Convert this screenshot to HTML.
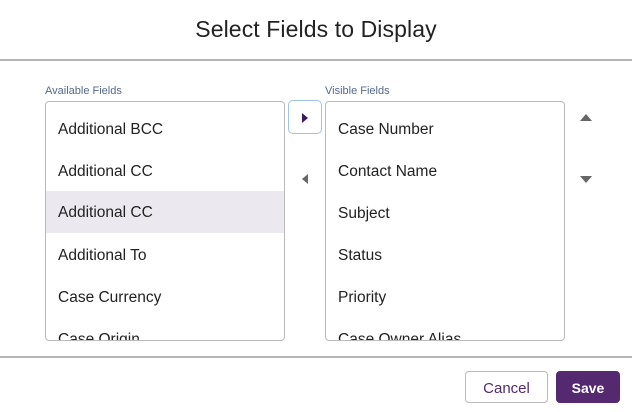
<!DOCTYPE html>
<html><head><style>
*{box-sizing:border-box;margin:0;padding:0}
body{width:632px;height:412px;background:#fff;font-family:"Liberation Sans",sans-serif;position:relative;overflow:hidden;color:#16325c}
.title{position:absolute;left:0;top:16px;width:632px;text-align:center;font-size:23px;color:#222;letter-spacing:0.1px}
.hr{position:absolute;left:0;width:632px;height:2px;background:#b5b5b5}
.lbl{position:absolute;top:85px;font-size:11px;color:#54698d}
.box{position:absolute;top:101px;width:240px;height:240px;border:1px solid #bbb;border-radius:4px;overflow:hidden}
.row{position:absolute;left:0;width:100%;height:42px;line-height:46px;padding-left:12px;font-size:15.5px;color:#222}
.sel{background:#ebe9ef}
.btn{position:absolute;left:288px;top:100px;width:34px;height:34px;border:1px solid #9fc3ef;border-radius:5px}
.tri{position:absolute;width:0;height:0}
.cancel{position:absolute;left:465px;top:371px;width:83px;height:32px;border:1px solid #bbb;border-radius:4px;text-align:center;line-height:33px;font-size:15px;color:#54296f}
.save{position:absolute;left:556px;top:371px;width:64px;height:32px;background:#54296f;border-radius:4px;text-align:center;line-height:34px;font-size:14px;font-weight:bold;color:#fff}
</style></head><body>
<div class="title">Select Fields to Display</div>
<div class="hr" style="top:59px"></div>
<div class="lbl" style="left:45px">Available Fields</div>
<div class="lbl" style="left:325px">Visible Fields</div>
<div class="box" style="left:45px">
<div class="row" style="top:5px">Additional BCC</div>
<div class="row" style="top:47px">Additional CC</div>
<div class="row sel" style="top:89px;line-height:44px">Additional CC</div>
<div class="row" style="top:131px">Additional To</div>
<div class="row" style="top:173px">Case Currency</div>
<div class="row" style="top:215px">Case Origin</div>
</div>
<div class="box" style="left:325px">
<div class="row" style="top:5px">Case Number</div>
<div class="row" style="top:47px">Contact Name</div>
<div class="row" style="top:89px">Subject</div>
<div class="row" style="top:131px">Status</div>
<div class="row" style="top:173px">Priority</div>
<div class="row" style="top:215px">Case Owner Alias</div>
</div>
<div class="btn"></div>
<div class="tri" style="left:302px;top:113px;border-left:6px solid #3b1d5a;border-top:5px solid transparent;border-bottom:5px solid transparent"></div>
<div class="tri" style="left:302px;top:174px;border-right:6px solid #666;border-top:5px solid transparent;border-bottom:5px solid transparent"></div>
<div class="tri" style="left:580px;top:114px;border-bottom:7px solid #666;border-left:6px solid transparent;border-right:6px solid transparent"></div>
<div class="tri" style="left:580px;top:176px;border-top:7px solid #666;border-left:6px solid transparent;border-right:6px solid transparent"></div>
<div class="hr" style="top:356px"></div>
<div class="cancel">Cancel</div>
<div class="save">Save</div>
</body></html>
